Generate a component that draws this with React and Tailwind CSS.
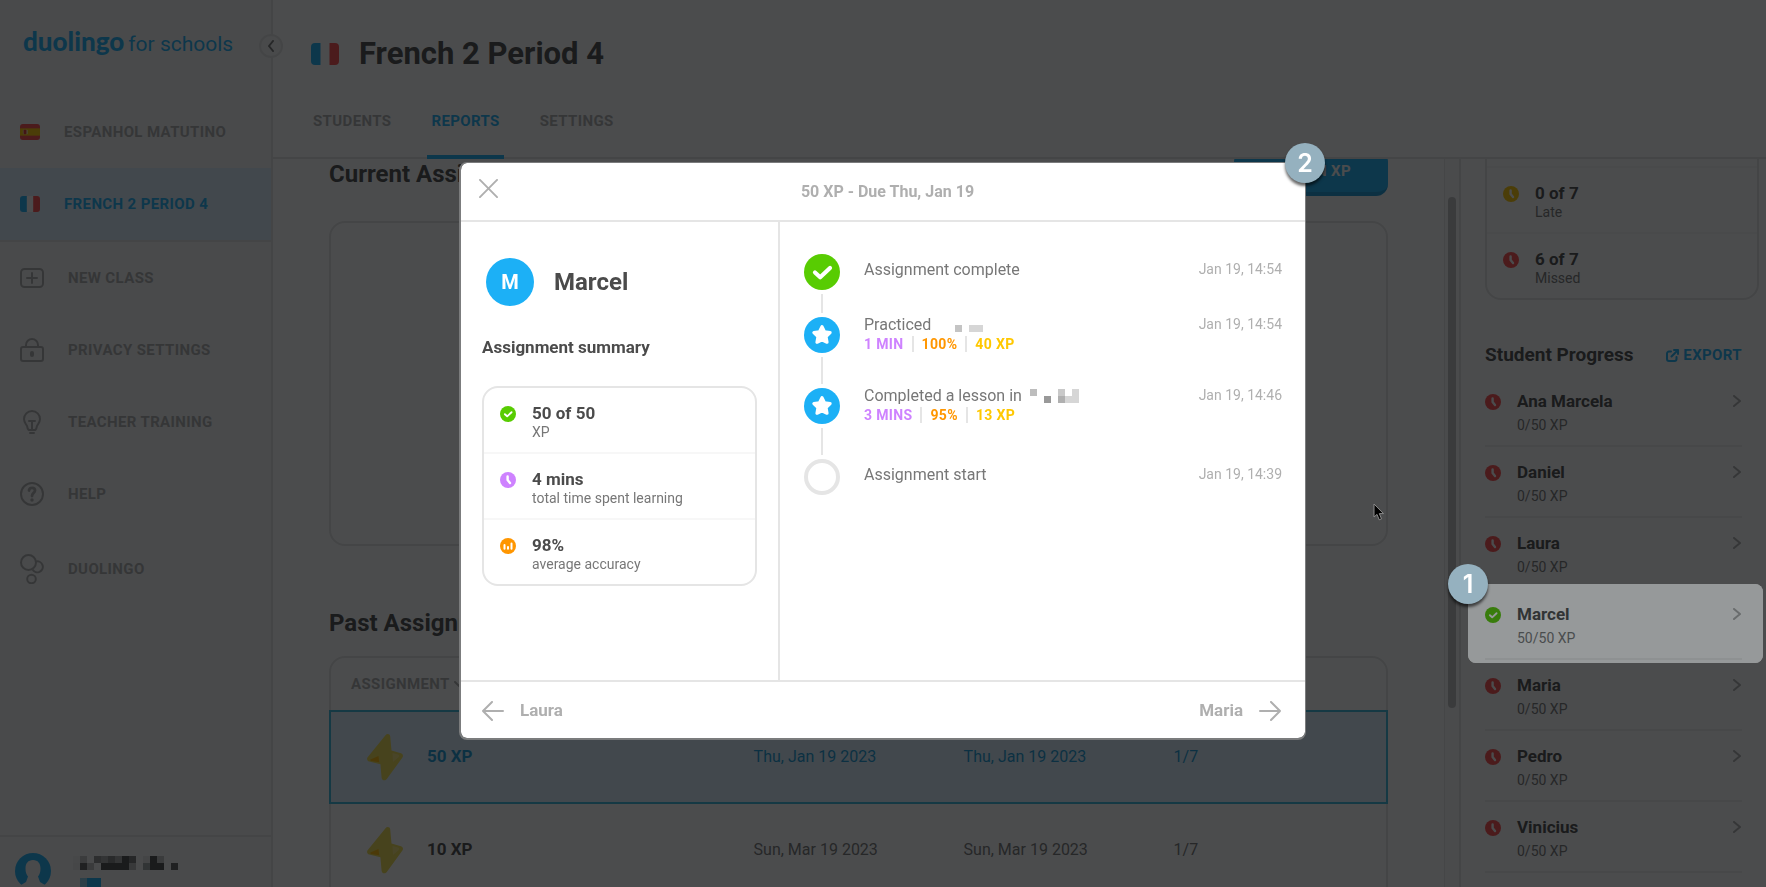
import { useState } from "react";

const classes = [
  { name: "Espanhol Matutino", flag: "es" },
  { name: "French 2 Period 4", flag: "fr" },
];

const tabs = ["Students", "Reports", "Settings"];

const assignments = [
  { name: "50 XP", assigned: "Thu, Jan 19 2023", due: "Thu, Jan 19 2023", done: "1/7" },
  { name: "10 XP", assigned: "Sun, Mar 19 2023", due: "Sun, Mar 19 2023", done: "1/7" },
];

const students = [
  { name: "Ana Marcela", xp: "0/50 XP" },
  { name: "Daniel", xp: "0/50 XP" },
  { name: "Laura", xp: "0/50 XP" },
  { name: "Marcel", xp: "50/50 XP", complete: true },
  { name: "Maria", xp: "0/50 XP" },
  { name: "Pedro", xp: "0/50 XP" },
  { name: "Vinicius", xp: "0/50 XP" },
];

const timeline = [
  { title: "Assignment complete", time: "Jan 19, 14:54", icon: "check", height: "h-[63px]" },
  {
    title: "Practiced",
    time: "Jan 19, 14:54",
    icon: "star",
    height: "h-[71px]",
    stats: ["1 min", "100%", "40 XP"],
    gap: "gap-6",
    blur: [[0, 1, "#c4c4c4"], [2, 1, "#d6d6d6"], [3, 1, "#d6d6d6"]],
  },
  {
    title: "Completed a lesson in",
    time: "Jan 19, 14:46",
    icon: "star",
    height: "h-[71px]",
    stats: ["3 mins", "95%", "13 XP"],
    gap: "gap-2",
    blur: [
      [0, 0, "#bdbdbd"],
      [2, 1, "#999999"],
      [4, 0, "#c9c9c9"],
      [4, 1, "#b0b0b0"],
      [5, 1, "#d6d6d6"],
      [6, 0, "#d6d6d6"],
      [6, 1, "#d6d6d6"],
    ],
  },
  { title: "Assignment start", time: "Jan 19, 14:39", icon: "ring", height: "h-9" },
];

/* ---------- Icons ---------- */

const Flag = ({ country, className }) =>
  country === "fr" ? (
    <svg className={className} viewBox="0 0 28 22" preserveAspectRatio="none">
      <rect width="28" height="22" rx="4" fill="#fff" />
      <path d="M4 0h5.500v22H4a4 4 0 0 1-4-4V4a4 4 0 0 1 4-4z" fill="#1cb0f6" />
      <path d="M18.500 0H24a4 4 0 0 1 4 4v14a4 4 0 0 1-4 4h-5.500z" fill="#ff4b4b" />
    </svg>
  ) : (
    <svg className={className} viewBox="0 0 28 22" preserveAspectRatio="none">
      <rect width="28" height="22" rx="4" fill="#ff4b4b" />
      <rect y="6" width="28" height="10" fill="#ffc800" />
      <rect x="4" y="8" width="7" height="6" rx="1" fill="#ffe9a0" />
      <rect x="5" y="8" width="4" height="6" rx="1" fill="#e0352f" />
    </svg>
  );

const PlusBox = () => (
  <svg className="w-6 h-6" viewBox="0 0 24 24" fill="none" stroke="currentColor" strokeWidth="2" strokeLinecap="round">
    <rect x="1" y="3" width="22" height="18" rx="3.5" />
    <path d="M12 7v10M7 12h10" />
  </svg>
);

const Lock = () => (
  <svg className="w-6 h-6" viewBox="0 0 24 24" fill="none" stroke="currentColor" strokeWidth="2">
    <rect x="1" y="9" width="22" height="14" rx="2" />
    <path d="M6 9V7a6 6 0 0 1 12 0v2" />
    <rect x="10" y="13" width="4" height="6" rx="2" fill="currentColor" stroke="none" />
  </svg>
);

const Bulb = () => (
  <svg className="w-6 h-6" viewBox="0 0 24 24" fill="none" stroke="currentColor" strokeWidth="2" strokeLinecap="round">
    <path d="M12 1a8 8 0 0 0-8 8c0 3 1.600 4.500 2.800 6.600C7.700 17.200 7.300 20 9.500 20h5c2.200 0 1.800-2.800 2.700-4.400C18.400 13.500 20 12 20 9a8 8 0 0 0-8-8z" />
    <path d="M9 11h6M12 11v9M10 23h4" />
  </svg>
);

const Help = () => (
  <svg className="w-6 h-6" viewBox="0 0 24 24" fill="none" stroke="currentColor" strokeWidth="2">
    <circle cx="12" cy="12" r="11" />
    <path d="M9 8.500C9.400 4.800 15 5 15 8.500c0 2.500-3 2.400-3 5.500" strokeWidth="2.800" strokeLinecap="round" />
    <circle cx="12" cy="18" r="1.700" fill="currentColor" stroke="none" />
  </svg>
);

const Bubbles = () => (
  <svg className="w-6 h-[30px]" viewBox="0 0 24 30" fill="none" stroke="currentColor" strokeWidth="2">
    <circle cx="8.500" cy="8.500" r="7.500" />
    <path d="M16 7.500a5.500 5.500 0 1 1-3.500 8" />
    <circle cx="11.500" cy="25" r="4.300" />
  </svg>
);

const links = [
  { name: "New Class", Icon: PlusBox },
  { name: "Privacy Settings", Icon: Lock },
  { name: "Teacher Training", Icon: Bulb },
  { name: "Help", Icon: Help },
  { name: "Duolingo", Icon: Bubbles },
];

const CheckDot = ({ className }) => (
  <svg className={className} viewBox="0 0 36 36">
    <circle cx="18" cy="18" r="18" fill="#58cc02" />
    <path d="M11 18.500l5.200 4.700 9.800-9.200" fill="none" stroke="#fff" strokeWidth="4.200" strokeLinecap="round" strokeLinejoin="round" />
  </svg>
);

const StarDot = ({ className }) => (
  <svg className={className} viewBox="0 0 36 36">
    <circle cx="18" cy="18" r="18" fill="#1cb0f6" />
    <path
      d="M18 9.700l2.500 5.100 5.600.8-4.100 4 1 5.600-5-2.400-5 2.400 1-5.600-4.100-4 5.600-.8z"
      fill="#fff"
      stroke="#fff"
      strokeWidth="3.200"
      strokeLinejoin="round"
    />
  </svg>
);

const RingDot = ({ className }) => (
  <svg className={className} viewBox="0 0 36 36">
    <circle cx="18" cy="18" r="16" fill="#fff" stroke="#e5e5e5" strokeWidth="4" />
  </svg>
);

const ClockDot = ({ className }) => (
  <svg className={className} viewBox="0 0 16 16">
    <circle cx="8" cy="8" r="8" fill="currentColor" />
    <path d="M7.600 4.500v3.600l2.400 2.900" fill="none" stroke="#fff" strokeWidth="2.400" strokeLinecap="round" strokeLinejoin="round" />
  </svg>
);

const ChartDot = ({ className }) => (
  <svg className={className} viewBox="0 0 16 16">
    <circle cx="8" cy="8" r="8" fill="#ff9600" />
    <path d="M4.500 7v3.800M8 9v1.800M11.500 5.500v5.300" stroke="#fff" strokeWidth="2" strokeLinecap="round" />
  </svg>
);

const Bolt = () => (
  <svg className="w-9 h-12" viewBox="0 0 36 48">
    <path
      d="M18.500 2.200C20 .2 23 .8 23.200 3.300l1.300 14.200 9.500 2.800c2 .7 2.500 2.600 1.400 4.300L19.800 46c-1.600 2.200-5 1.400-5.200-1.300l-1.200-13.400L2.200 28.500C.2 28-.5 26 .6 24.200z"
      fill="#f0dc50"
    />
    <path d="M3.500 26.500l8-3.500.7 6.200-8-1.300c-.8-.2-1.200-.9-.7-1.400z" fill="#ffb800" />
    <path d="M25.500 20l5.500 1.600c1.500.6 1.600 1.700.5 2.700L26 29z" fill="#fff0a0" opacity=".5" />
  </svg>
);

const ChevronRight = () => (
  <svg className="w-2 h-3" viewBox="0 0 8 12" fill="none" stroke="#afafaf" strokeWidth="2" strokeLinecap="round" strokeLinejoin="round">
    <path d="M1 1l6 5-6 5" />
  </svg>
);

const Arrow = ({ className }) => (
  <svg className={className} width="22" height="20" viewBox="0 0 22 20" fill="none" stroke="currentColor" strokeWidth="2" strokeLinecap="round" strokeLinejoin="round">
    <path d="M21 10H1M10 1L1 10l9 9" />
  </svg>
);

// Censored text, drawn as a mosaic of 7px cells
const Mosaic = ({ cells, cols, rows }) => (
  <svg width={cols * 7} height={rows * 7} className="shrink-0">
    {cells.map(([x, y, color], index) => (
      <rect key={index} x={x * 7} y={y * 7} width="7" height="7" fill={color} />
    ))}
  </svg>
);

const NumberBadge = ({ children, className }) => (
  <span
    className={`absolute z-40 w-10 h-10 rounded-full bg-[#95b1bf] text-white font-['Inter',sans-serif] font-semibold text-[25px] leading-10 text-center shadow-[0_3px_3px_rgba(0,0,0,0.6)] ${className}`}
  >
    {children}
  </span>
);

/* ---------- Shared pieces ---------- */

const StatRow = ({ icon, value, label }) => (
  <li className="flex gap-4 px-4 pt-[14px] pb-3">
    <span className="pt-1">{icon}</span>
    <div>
      <p className="font-bold text-[17px] leading-[22px] text-[#4b4b4b]">{value}</p>
      <p className="text-sm leading-4 text-[#777]">{label}</p>
    </div>
  </li>
);

const StatCard = ({ children, className }) => (
  <ul className={`border-2 border-[#e5e5e5] rounded-2xl divide-y-2 divide-[#f7f7f7] ${className || ""}`}>
    {children}
  </ul>
);

const Sidebar = () => (
  <aside className="w-[273px] shrink-0 relative flex flex-col bg-[#f7f7f7] border-r-2 border-[#e5e5e5]">
    <a href="#home" className="h-24 pl-[23px] pt-[23px] flex items-baseline gap-1 text-[#1cb0f6] leading-9">
      <span className="font-['Lato',sans-serif] font-black text-[26px] leading-9">duolingo</span>
      <span className="text-[21px] leading-9">for schools</span>
    </a>

    <button
      aria-label="Collapse menu"
      className="absolute top-[34px] -right-3 w-6 h-6 rounded-full bg-[#f7f7f7] border-2 border-[#e5e5e5] text-[#777] flex items-center justify-center"
    >
      <svg width="6" height="12" viewBox="0 0 6 12" fill="none" stroke="currentColor" strokeWidth="2" strokeLinecap="round" strokeLinejoin="round">
        <path d="M5 1L1 6l4 5" />
      </svg>
    </button>

    <nav className="flex-1 font-bold text-[15px] tracking-wide uppercase text-[#afafaf]">
      <div className="border-b-2 border-[#e5e5e5]">
        {classes.map(({ name, flag }) => (
          <a
            key={name}
            href="#class"
            className={`flex items-center gap-6 h-[72px] px-5 ${
              flag === "fr" ? "bg-[#ddf1ff] text-[#1cb0f6]" : ""
            }`}
          >
            <Flag country={flag} className="w-5 h-4" />
            {name}
          </a>
        ))}
      </div>
      {links.map(({ name, Icon }) => (
        <a key={name} href="#link" className="flex items-center gap-6 px-5 py-6">
          <Icon />
          {name}
        </a>
      ))}
    </nav>

    <div className="h-[52px] shrink-0 border-t-2 border-[#e5e5e5] pl-[15px] pt-4 flex gap-[22px] overflow-hidden">
      <svg className="w-9 h-9 shrink-0" viewBox="0 0 36 36">
        <circle cx="18" cy="18" r="18" fill="#1cb0f6" />
        <path d="M18 7c-5 0-7.500 3.500-7.500 8.500 0 4 1 6 2.500 8L11 29l-5 3v6h24v-6l-5-3-2-5.500c1.500-2 2.500-4 2.500-8C25.500 10.500 23 7 18 7z" fill="#f7f7f7" />
      </svg>
      <div className="pt-[3px] flex flex-col gap-2">
        <Mosaic
          cols={15}
          rows={2}
          cells={[
            [0, 0, "#efefef"], [1, 0, "#c4c4c4"], [3, 0, "#909090"], [4, 0, "#a8a8a8"], [5, 0, "#808080"],
            [6, 0, "#a8a8a8"], [7, 0, "#4b4b4b"], [8, 0, "#777777"], [10, 0, "#e5e5e5"], [11, 0, "#4b4b4b"], [12, 0, "#c0c0c0"],
            [0, 1, "#ebebeb"], [1, 1, "#606060"], [2, 1, "#c0c0c0"], [4, 1, "#4b4b4b"], [5, 1, "#4b4b4b"], [6, 1, "#4b4b4b"],
            [7, 1, "#4b4b4b"], [8, 1, "#b8b8b8"], [10, 1, "#a0a8a8"], [11, 1, "#4b4b4b"], [12, 1, "#4b4b4b"], [14, 1, "#606060"],
          ]}
        />
        <Mosaic
          cols={4}
          rows={2}
          cells={[
            [1, 0, "#8dcdec"], [2, 0, "#1cb0f6"], [3, 0, "#1cb0f6"],
            [1, 1, "#8dcdec"], [2, 1, "#1cb0f6"], [3, 1, "#1cb0f6"],
          ]}
        />
      </div>
    </div>
  </aside>
);

const Reports = () => (
  <main className="flex-1 min-w-0 px-14 overflow-hidden">
    <div className="-mt-[9px] flex justify-between items-start">
      <h2 className="pt-[10px] font-bold text-2xl leading-7 text-[#4b4b4b]">Current Assignments</h2>
      <button className="w-[154px] h-[46px] rounded-xl bg-[#1cb0f6] border-b-4 border-[#1899d6] text-white font-bold text-[15px] tracking-wide uppercase">
        Assign XP
      </button>
    </div>
    <div className="mt-[25px] h-[325px] border-2 border-[#e5e5e5] rounded-2xl" />

    <h2 className="mt-[63px] mb-[19px] font-bold text-2xl leading-7 text-[#4b4b4b]">Past Assignments</h2>
    <div className="border-2 border-[#e5e5e5] rounded-2xl h-72">
      <table className="-mx-[2px] w-[calc(100%+4px)] table-fixed border-separate border-spacing-0 text-left text-base">
        <thead>
          <tr className="h-[52px] text-[15px] tracking-wide uppercase text-[#afafaf]">
            <th className="w-2/5 pl-[22px]">
              <button className="flex items-center gap-1 font-bold tracking-wide uppercase">
                Assignment
                <svg width="10" height="6" viewBox="0 0 10 6" fill="none" stroke="currentColor" strokeWidth="2" strokeLinecap="round">
                  <path d="M1 1l4 4 4-4" />
                </svg>
              </button>
            </th>
            <th className="w-[210px]">Assigned</th>
            <th className="w-[210px]">Due</th>
            <th>Completed</th>
          </tr>
        </thead>
        <tbody>
          {assignments.map((item, index) => (
            <tr
              key={item.name}
              className={`[&>td+td]:pl-px ${
                index === 0
                  ? "h-[94px] text-[#1899d6] bg-[#ddf1ff] [&>td]:border-y-2 [&>td]:border-[#38b8dd] [&>td:first-child]:border-l-2 [&>td:last-child]:border-r-2"
                  : "h-[92px] text-[#777]"
              }`}
            >
              <td className="pl-9">
                <div className={`flex items-center gap-6 font-bold text-[17px] ${index === 0 ? "" : "pl-[2px] text-[#4b4b4b]"}`}>
                  <Bolt />
                  {item.name}
                </div>
              </td>
              <td>{item.assigned}</td>
              <td>{item.due}</td>
              <td>{item.done}</td>
            </tr>
          ))}
        </tbody>
      </table>
    </div>
  </main>
);

const StudentProgress = () => (
  <aside className="w-[307px] shrink-0 border-l-2 border-[#e5e5e5] pl-6 overflow-y-clip overflow-x-visible">
    <StatCard className="-mt-[59px] mr-[7px]">
      <StatRow icon={<CheckDot className="w-4 h-4" />} value="1 of 7" label="Complete" />
      <StatRow icon={<ClockDot className="w-4 h-4 text-[#ffc800]" />} value="0 of 7" label="Late" />
      <StatRow icon={<ClockDot className="w-4 h-4 text-[#ff4b4b]" />} value="6 of 7" label="Missed" />
    </StatCard>

    <div className="mt-[43px] mb-[9px] mr-6 flex items-center justify-between">
      <h2 className="font-bold text-[19px] leading-6 text-[#4b4b4b]">Student Progress</h2>
      <button className="flex items-center gap-1 font-bold text-[15px] leading-6 tracking-wide uppercase text-[#1cb0f6]">
        <svg width="13" height="13" viewBox="0 0 13 13" fill="none" stroke="currentColor" strokeWidth="2" strokeLinecap="round" strokeLinejoin="round">
          <path d="M5 2.500H3a2 2 0 0 0-2 2V10a2 2 0 0 0 2 2h5.500a2 2 0 0 0 2-2V8M8 1h4v4M12 1L5.500 7.500" />
        </svg>
        Export
      </button>
    </div>

    <ul className="mr-6">
      {students.map(({ name, xp, complete }) => (
        <li key={name} className={`relative ${complete ? "z-30" : ""}`}>
          {complete && <div className="absolute -top-[5px] -bottom-[3px] -left-[17px] -right-[21px] rounded-lg bg-white" />}
          <a href="#student" className="relative flex gap-4 pt-[14px] pb-3 border-b-2 border-[#f0f0f0]">
            <span className="pt-1">
              {complete ? <CheckDot className="w-4 h-4" /> : <ClockDot className="w-4 h-4 text-[#ff4b4b]" />}
            </span>
            <div className="flex-1">
              <p className="font-bold text-[17px] leading-[22px] text-[#4b4b4b]">{name}</p>
              <p className="mt-[5px] text-sm leading-4 text-[#777]">{xp}</p>
            </div>
            <span className="pt-[5px] pr-px">
              <ChevronRight />
            </span>
          </a>
          {complete && (
            <>
              <div className="absolute -top-[5px] -bottom-[3px] -left-[17px] -right-[21px] rounded-lg bg-[#101619]/44" />
              <NumberBadge className="-top-[25px] -left-[37px]">1</NumberBadge>
            </>
          )}
        </li>
      ))}
    </ul>
  </aside>
);

const TimelineIcon = ({ type }) => {
  if (type === "check") return <CheckDot className="w-9 h-9 shrink-0" />;
  if (type === "star") return <StarDot className="w-9 h-9 shrink-0" />;
  return <RingDot className="w-9 h-9 shrink-0" />;
};

const AssignmentModal = () => (
  <div
    role="dialog"
    aria-label="Assignment details"
    className="relative w-[847px] max-w-full bg-white bg-clip-padding rounded-lg border border-l-2 border-b-2 border-[#7b7c7d]"
  >
    <NumberBadge className="-top-5 -right-5">2</NumberBadge>

    <header className="flex items-center pl-[18px] pr-7 h-[59px] border-b-2 border-[#e5e5e5] text-[#afafaf]">
      <button aria-label="Close" className="-mt-1.5">
        <svg width="19" height="19" viewBox="0 0 20 20" stroke="currentColor" strokeWidth="2" strokeLinecap="round">
          <path d="M1 1l18 18M19 1L1 19" />
        </svg>
      </button>
      <h1 className="flex-1 text-center font-bold text-base">50 XP - Due Thu, Jan 19</h1>
    </header>

    <div className="flex min-h-[458px]">
      <section className="w-[319px] shrink-0 border-r-2 border-[#e5e5e5] px-[21px] pt-9">
        <div className="flex items-center gap-5 pl-1">
          <span className="w-12 h-12 rounded-full bg-[#1cb0f6] text-white text-xl font-bold flex items-center justify-center">M</span>
          <h2 className="font-bold text-2xl text-[#4b4b4b]">Marcel</h2>
        </div>
        <h3 className="mt-[29px] mb-[27px] font-bold text-[17px] leading-6 text-[#4b4b4b]">Assignment summary</h3>
        <StatCard>
          <StatRow icon={<CheckDot className="w-4 h-4" />} value="50 of 50" label="XP" />
          <StatRow icon={<ClockDot className="w-4 h-4 text-[#ce82ff]" />} value="4 mins" label="total time spent learning" />
          <StatRow icon={<ChartDot className="w-4 h-4" />} value="98%" label="average accuracy" />
        </StatCard>
      </section>

      <ol className="flex-1 pl-6 pr-[23px] pt-8">
        {timeline.map((item) => (
          <li key={item.title} className={`flex gap-6 ${item.height}`}>
            <div className="flex flex-col items-center gap-1 pb-1">
              <TimelineIcon type={item.icon} />
              {item.icon !== "ring" && <span className="flex-1 w-[2px] bg-[#e5e5e5]" />}
            </div>
            <div className={`flex-1 ${item.stats ? "-mt-[3px]" : "mt-[5px]"}`}>
              <div className="flex justify-between">
                <p className={`flex items-center text-base leading-[22px] text-[#777] ${item.gap || ""}`}>
                  {item.title}
                  {item.blur && <Mosaic cols={7} rows={2} cells={item.blur} />}
                </p>
                <time className="text-sm leading-5 text-[#afafaf]">{item.time}</time>
              </div>
              {item.stats && (
                <p className="flex gap-2 font-bold text-sm leading-4 tracking-wide uppercase">
                  <span className="text-[#ce82ff]">{item.stats[0]}</span>
                  <span className="w-[2px] bg-[#e5e5e5]" />
                  <span className="text-[#ff9600]">{item.stats[1]}</span>
                  <span className="w-[2px] bg-[#e5e5e5]" />
                  <span className="text-[#ffc800]">{item.stats[2]}</span>
                </p>
              )}
            </div>
          </li>
        ))}
      </ol>
    </div>

    <footer className="flex items-center justify-between h-[58px] pt-[2px] pl-[21px] pr-6 border-t-2 border-[#e5e5e5] font-bold text-[17px] text-[#afafaf]">
      <button className="flex items-center gap-4">
        <Arrow />
        Laura
      </button>
      <button className="flex items-center gap-4">
        Maria
        <Arrow className="rotate-180" />
      </button>
    </footer>
  </div>
);

const App = () => {
  const [activeTab, setActiveTab] = useState("Reports");

  return (
    <div className="flex h-screen overflow-hidden bg-white font-['Roboto',sans-serif]">
      <Sidebar />

      <div className="flex-1 min-w-0 flex flex-col">
        <header className="h-[159px] shrink-0 border-b-2 border-[#e5e5e5] flex flex-col justify-between">
          <div className="flex items-center gap-5 pl-[38px] pt-[34px]">
            <Flag country="fr" className="w-7 h-[22px]" />
            <h1 className="font-bold text-[31px] leading-10 text-[#4b4b4b]">French 2 Period 4</h1>
          </div>
          <nav className="-mb-[2px] flex gap-8 pl-9">
            {tabs.map((tab) => (
              <button
                key={tab}
                onClick={() => setActiveTab(tab)}
                className={`px-1 pb-6 border-b-4 font-bold text-[15px] leading-5 tracking-wide uppercase ${
                  activeTab === tab ? "text-[#1cb0f6] border-[#1cb0f6]" : "text-[#afafaf] border-transparent"
                }`}
              >
                {tab}
              </button>
            ))}
          </nav>
        </header>

        <div className="flex-1 min-h-0 flex">
          <Reports />
          {/* Scroll bar */}
          <div className="w-[15px] shrink-0 border-l border-[#e8e8e8] bg-[#fafafa] pl-[3px] pt-[38px]">
            <div className="w-2 h-[511px] rounded-full bg-[#c1c1c1]" />
          </div>
          <StudentProgress />
        </div>
      </div>

      {/* Dimmed backdrop with the dialog on top */}
      <div className="fixed inset-0 z-20 grid place-items-center pt-[15px] pr-px bg-[#080a0b]/73">
        <AssignmentModal />
        <svg className="absolute left-[1373px] top-[503px] w-3 h-[18px]" viewBox="0 0 12 18">
          <path d="M1 1v13l3-2.600 2.200 5.400 2.300-1L6.300 10.600h4.200z" fill="#000" stroke="#8a8a8a" strokeWidth="1" />
        </svg>
      </div>
    </div>
  );
};

export default App;
